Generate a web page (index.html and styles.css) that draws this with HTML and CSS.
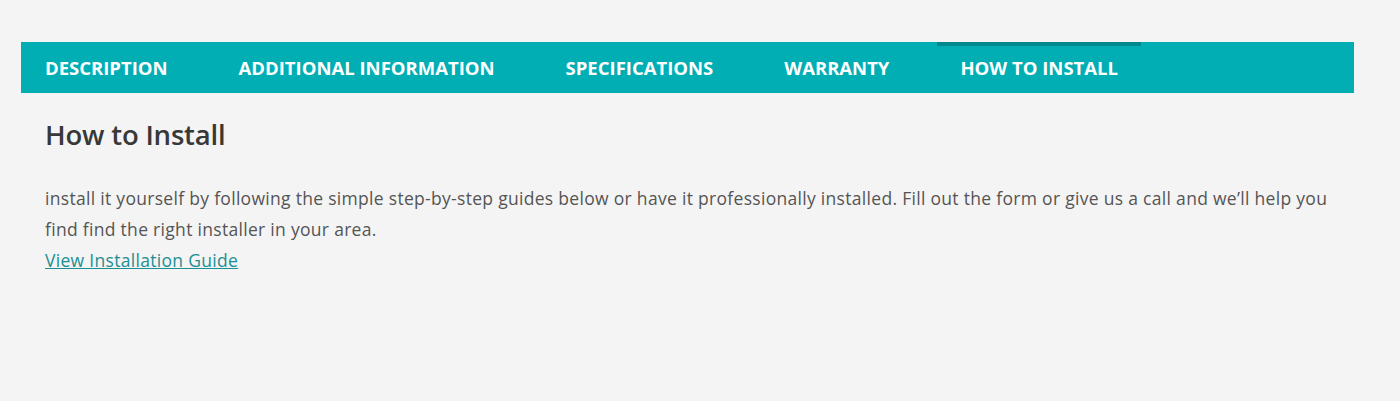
FILE: index.html
```html
<!DOCTYPE html>
<html>
<head>
<meta charset="utf-8">
<link rel="stylesheet" href="styles.css">
</head>
<body>
<div class="page">
  <nav class="tabs">
    <a class="tab">DESCRIPTION</a>
    <a class="tab">ADDITIONAL INFORMATION</a>
    <a class="tab">SPECIFICATIONS</a>
    <a class="tab">WARRANTY</a>
    <a class="tab active">HOW TO INSTALL</a>
  </nav>
  <section class="panel">
    <h2 class="title">How to Install</h2>
    <p class="text">install it yourself by following the simple step-by-step guides below or have it professionally installed. Fill out the form or give us a call and we’ll help you find find the right installer in your area.<br><a class="link" href="#">View Installation Guide</a></p>
  </section>
</div>
</body>
</html>
```
FILE: styles.css
```css
html, body {
  margin: 0;
  padding: 0;
  background: #f4f4f4;
}
body {
  font-family: "Open Sans", "Noto Sans", sans-serif;
}
.page {
  padding: 42px 46px 0 21px;
}
.tabs {
  display: flex;
  gap: 25px;
  background: #00aeb4;
  height: 51px;
  padding-left: 1px;
}
.tab {
  box-sizing: border-box;
  padding: 0 23px;
  border-top: 4px solid transparent;
  color: #fff;
  font-weight: 700;
  font-size: 18.5px;
  line-height: 44px;
  letter-spacing: 0;
  white-space: nowrap;
  cursor: pointer;
}
.tab.active {
  border-top-color: #00888e;
}
.panel {
  padding: 0 24px;
}
.title {
  margin: 25px 0 0;
  font-size: 27.5px;
  font-weight: 600;
  letter-spacing: -0.2px;
  color: #383838;
  line-height: 34px;
}
.text {
  margin: 31px 0 0;
  font-size: 17.5px;
  line-height: 31px;
  letter-spacing: 0.3px;
  color: #555;
  max-width: 1290px;
}
.link {
  color: #1b8f92;
  text-decoration: underline;
}
```
